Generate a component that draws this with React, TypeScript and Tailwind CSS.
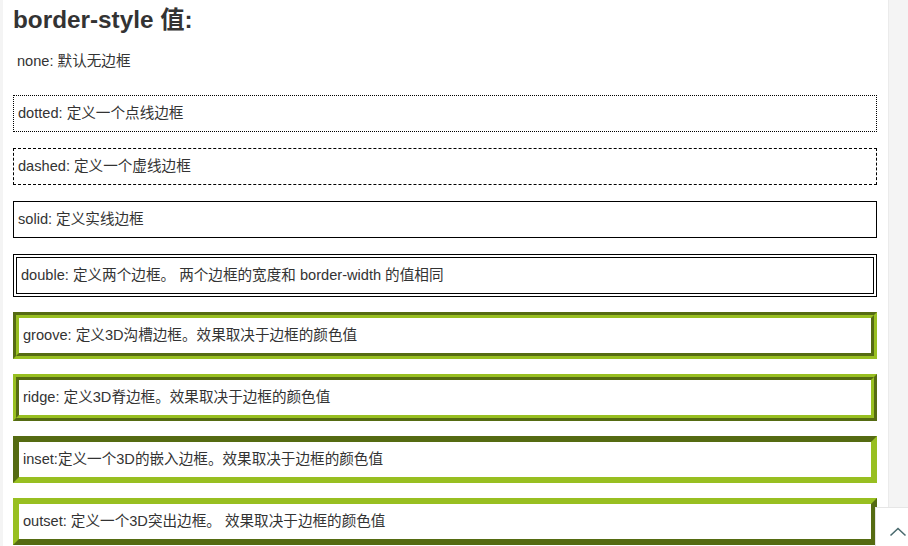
import React from 'react';

const font = { fontFamily: '"Liberation Sans", Arial, "Noto Sans CJK SC", sans-serif' };

const rows: { text: string; cls: string }[] = [
  { text: 'dotted: 定义一个点线边框', cls: 'border border-dotted border-black mb-[16px]' },
  { text: 'dashed: 定义一个虚线边框', cls: 'border border-dashed border-black mb-[16px]' },
  { text: 'solid: 定义实线边框', cls: 'border border-solid border-black mb-[16px]' },
  { text: 'double: 定义两个边框。 两个边框的宽度和 border-width 的值相同', cls: 'border-4 border-double border-black mb-[15px]' },
  { text: 'groove: 定义3D沟槽边框。效果取决于边框的颜色值', cls: 'border-[6px] [border-style:groove] border-[#98bf21] mb-[15px]' },
  { text: 'ridge: 定义3D脊边框。效果取决于边框的颜色值', cls: 'border-[6px] [border-style:ridge] border-[#98bf21] mb-[15px]' },
  { text: 'inset:定义一个3D的嵌入边框。效果取决于边框的颜色值', cls: 'border-[6px] [border-style:inset] border-[#98bf21] mb-[15px]' },
  { text: 'outset: 定义一个3D突出边框。 效果取决于边框的颜色值', cls: 'border-[6px] [border-style:outset] border-[#98bf21] mb-[15px]' },
];

export default function App() {
  return (
    <div className="relative flex h-[546px] w-[908px] overflow-hidden bg-white text-[#333]" style={font}>
      {/* left strip */}
      <div className="w-[3px] shrink-0 bg-[#f4f4f4]" />

      {/* article */}
      <div className="flex-1 pl-[10px] pr-[11px] pt-[6px]">
        <h2 className="mb-[10px] text-[24.3px] font-bold leading-[28px]">border-style 值:</h2>
        <p className="mb-[16px] px-[4px] py-[7px] text-[14.6px] leading-[21px]">none: 默认无边框</p>
        {rows.map(r => (
          <p key={r.text} className={`px-[4px] py-[7px] text-[14.6px] leading-[21px] ${r.cls}`}>
            {r.text}
          </p>
        ))}
      </div>

      {/* right sidebar */}
      <div className="w-[20px] shrink-0 border-l border-[#ebebeb] bg-[#f4f4f4]" />

      {/* back to top */}
      <div className="absolute bottom-0 right-0 flex h-[39px] w-[33px] items-start justify-end border-l border-t border-[#e6e6e6] bg-white pr-[1px] pt-[19px]">
        <svg width="18" height="10" viewBox="0 0 18 10" fill="none">
          <path d="M1.5 8.5 L9 1.5 L16.5 8.5" stroke="#4a6a6e" strokeWidth="1.6" />
        </svg>
      </div>
    </div>
  );
}
